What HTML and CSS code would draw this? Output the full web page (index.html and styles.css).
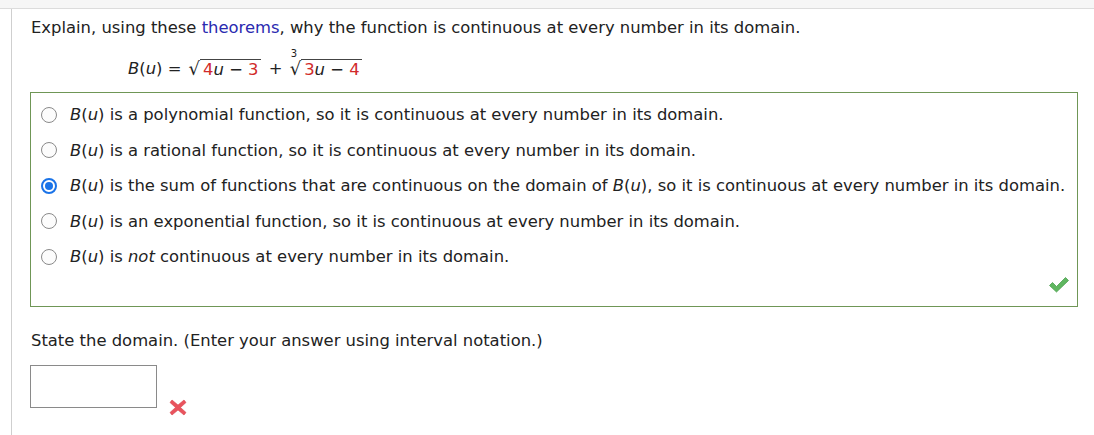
FILE: index.html
```html
<!DOCTYPE html>
<html>
<head>
<meta charset="utf-8">
<link rel="stylesheet" href="styles.css">
</head>
<body>
<div class="topband"></div>
<div class="main">
  <p class="prompt">Explain, using these <span class="link">theorems</span>, why the function is continuous at every number in its domain.</p>
  <div class="equation">
    <span class="it">B</span>(<span class="it">u</span>) = <span class="rad"><span class="radsign">√</span><span class="radicand"><span class="red">4</span><span class="it">u</span> − <span class="red">3</span></span></span> + <span class="rad"><span class="index">3</span><span class="radsign">√</span><span class="radicand"><span class="red">3</span><span class="it">u</span> − <span class="red">4</span></span></span>
  </div>
  <div class="answerbox">
    <div class="opt"><span class="radio"></span><span><span class="it">B</span>(<span class="it">u</span>) is a polynomial function, so it is continuous at every number in its domain.</span></div>
    <div class="opt"><span class="radio"></span><span><span class="it">B</span>(<span class="it">u</span>) is a rational function, so it is continuous at every number in its domain.</span></div>
    <div class="opt"><span class="radio checked"></span><span><span class="it">B</span>(<span class="it">u</span>) is the sum of functions that are continuous on the domain of <span class="it">B</span>(<span class="it">u</span>), so it is continuous at every number in its domain.</span></div>
    <div class="opt"><span class="radio"></span><span><span class="it">B</span>(<span class="it">u</span>) is an exponential function, so it is continuous at every number in its domain.</span></div>
    <div class="opt"><span class="radio"></span><span><span class="it">B</span>(<span class="it">u</span>) is <span class="it">not</span> continuous at every number in its domain.</span></div>
    <div class="markrow">
      <svg class="check" width="22" height="17" viewBox="0 0 22 17"><path d="M1.5 9.5 L4.5 6.5 L8.5 10.5 L17.5 1.5 L20.5 4.5 L8.5 16 Z" fill="#5fb760" stroke="#4fa052" stroke-width="0.8" stroke-linejoin="round"/></svg>
    </div>
  </div>
  <p class="prompt2">State the domain. (Enter your answer using interval notation.)</p>
  <div class="inputrow">
    <span class="inputbox"></span>
    <svg class="cross" width="18" height="17" viewBox="0 0 18 17"><path d="M3 1 L9 6 L15 1 L17 3.5 L11.5 8.5 L17 13.5 L15 16 L9 11 L3 16 L1 13.5 L6.5 8.5 L1 3.5 Z" fill="#e9535d" stroke="#d9434d" stroke-width="0.6" stroke-linejoin="round"/></svg>
  </div>
</div>
</body>
</html>
```
FILE: styles.css
```css
html, body {
  margin: 0;
  padding: 0;
  background: #ffffff;
}
body {
  font-family: "DejaVu Sans", Verdana, sans-serif;
  font-size: 16.4px;
  color: #222;
  height: 435px;
  overflow: hidden;
}
.topband {
  height: 8px;
  background: #f6f6f6;
  border-bottom: 1px solid #dcdcdc;
}
.main {
  margin-left: 11px;
  border-left: 1px solid #cfcfcf;
  padding: 9px 16px 0 18px;
  height: 426px;
  box-sizing: border-box;
}
.prompt {
  margin: 0 0 0 1px;
  line-height: 20px;
}
.link {
  color: #2a2ab0;
}
.equation {
  margin-top: 21px;
  margin-left: 98px;
  line-height: 20px;
  height: 20px;
  display: flex;
  align-items: flex-end;
  white-space: pre;
}
.it {
  font-style: italic;
}
.red {
  color: #d12a2a;
}
.rad {
  display: inline-flex;
  align-items: flex-end;
  position: relative;
  margin: 0 3px 0 2px;
}
.radsign {
  font-size: 18px;
  line-height: 20px;
}
.radicand {
  border-top: 1px solid #444;
  padding: 0 2px 0 3px;
  line-height: 19px;
}
.index {
  position: absolute;
  left: 1px;
  top: -10px;
  font-size: 10px;
  line-height: 10px;
}
.answerbox {
  margin-top: 13px;
  border: 1px solid #6f9656;
  padding: 4px 0 0 0;
}
.opt {
  height: 35.5px;
  display: flex;
  align-items: center;
  padding-left: 10px;
}
.radio {
  width: 16px;
  height: 16px;
  border: 1px solid #8a8a8a;
  border-radius: 50%;
  background: #fcfcfc;
  margin-right: 13px;
  box-sizing: border-box;
  flex: none;
  position: relative;
}
.radio.checked {
  border: 2px solid #1a73e8;
  background: #fff;
}
.radio.checked::after {
  content: "";
  position: absolute;
  left: 2px;
  top: 2px;
  width: 8px;
  height: 8px;
  border-radius: 50%;
  background: #1a73e8;
}
.markrow {
  height: 31px;
  display: flex;
  justify-content: flex-end;
  align-items: flex-start;
  padding-right: 7px;
}
.check {
  margin-top: 1px;
}
.prompt2 {
  margin: 24px 0 0 1px;
  line-height: 20px;
}
.inputrow {
  margin-top: 14px;
  display: flex;
  align-items: flex-end;
}
.inputbox {
  width: 127px;
  height: 43px;
  border: 1px solid #8a8a8a;
  box-sizing: border-box;
}
.cross {
  margin-left: 12px;
  margin-bottom: -8px;
}
```
